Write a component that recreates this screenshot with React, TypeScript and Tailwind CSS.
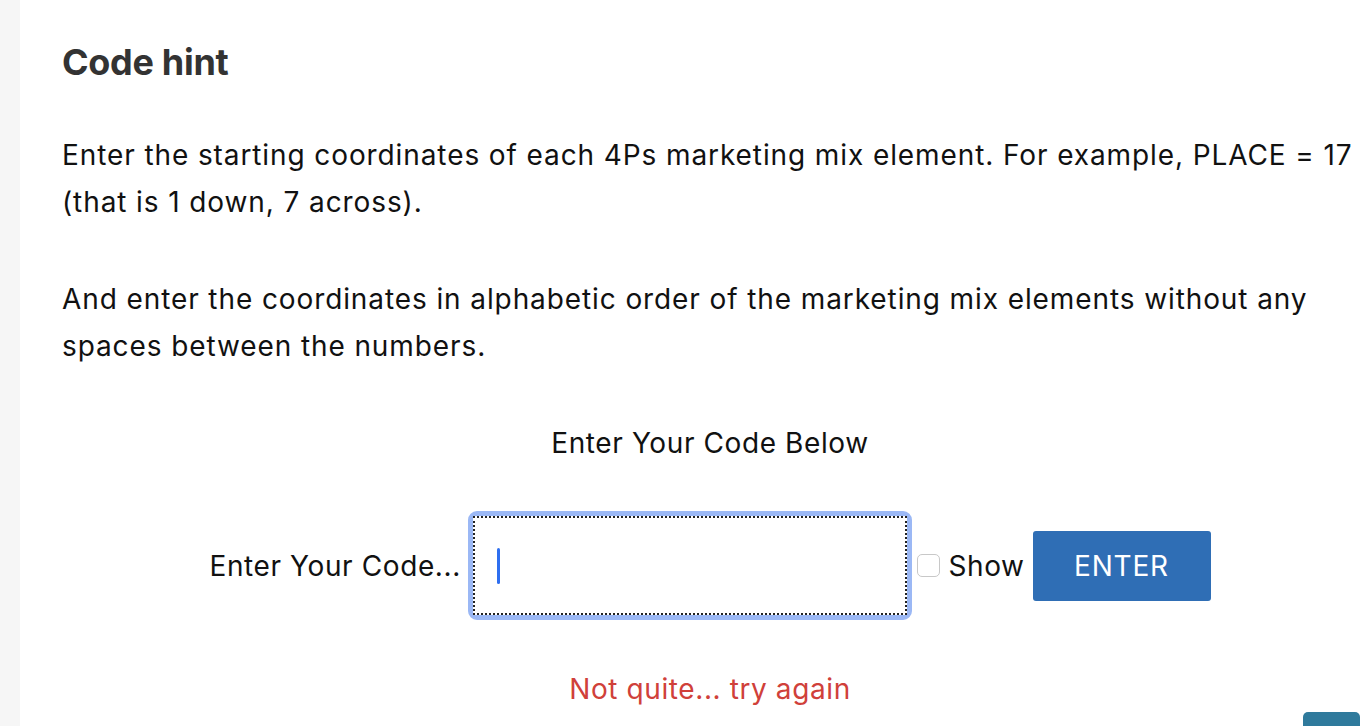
import React from 'react';

const App: React.FC = () => {
    return (
        <div className="relative flex min-h-[726px] w-[1368px] overflow-hidden bg-white font-['Inter',sans-serif] text-[#111]">
            <div className="w-[20px] shrink-0 bg-[#f6f6f6]" />
            <div className="flex-1 pl-[42px] pr-[10px] pt-[38px]">
                <h2 className="text-[36px] font-bold leading-[48px] text-[#333] tracking-[-0.3px]">Code hint</h2>
                <p className="mt-[46px] text-[28px] leading-[47px] tracking-[0.9px]">
                    Enter the starting coordinates of each 4Ps marketing mix element. For example, PLACE = 17 (that is 1 down, 7 across).
                </p>
                <p className="mt-[50px] text-[28px] leading-[47px] tracking-[0.9px]">
                    And enter the coordinates in alphabetic order of the marketing mix elements without any spaces between the numbers.
                </p>
                <div className="mt-[50px] flex flex-col items-center">
                    <div className="text-[28px] leading-[47px] tracking-[0.6px]">Enter Your Code Below</div>
                    <div className="mt-[44px] flex items-center">
                        <span className="w-[253px] whitespace-nowrap text-[28px] tracking-[0.6px]">Enter Your Code...</span>
                        <div className="relative ml-[5px] h-[109px] w-[444px] rounded-[9px] border-[5px] border-[#9bb8f5] bg-white">
                            <input
                                type="text"
                                className="h-full w-full border-2 border-dotted border-[#222] bg-white outline-none"
                            />
                            <span className="absolute left-[24px] top-[32px] h-[36px] w-[3px] rounded-full bg-[#2f6ff0]" />
                        </div>
                        <input
                            type="checkbox"
                            className="ml-[5px] h-[23px] w-[23px] appearance-none rounded-[5px] border border-[#c8c8c8] bg-white"
                        />
                        <span className="ml-[9px] w-[75px] text-[28px] tracking-[0.6px]">Show</span>
                        <button className="ml-[9px] h-[70px] w-[178px] rounded-[3px] bg-[#2f6eb5] text-[28px] tracking-[0.8px] text-white">
                            ENTER
                        </button>
                    </div>
                    <div className="mt-[46px] text-[28px] leading-[47px] text-[#d0403a] tracking-[0.6px]">Not quite... try again</div>
                </div>
            </div>
            <div className="absolute bottom-[-20px] right-[8px] h-[34px] w-[57px] rounded-[5px] bg-[#2f7a9c]" />
        </div>
    );
};

export default App;
